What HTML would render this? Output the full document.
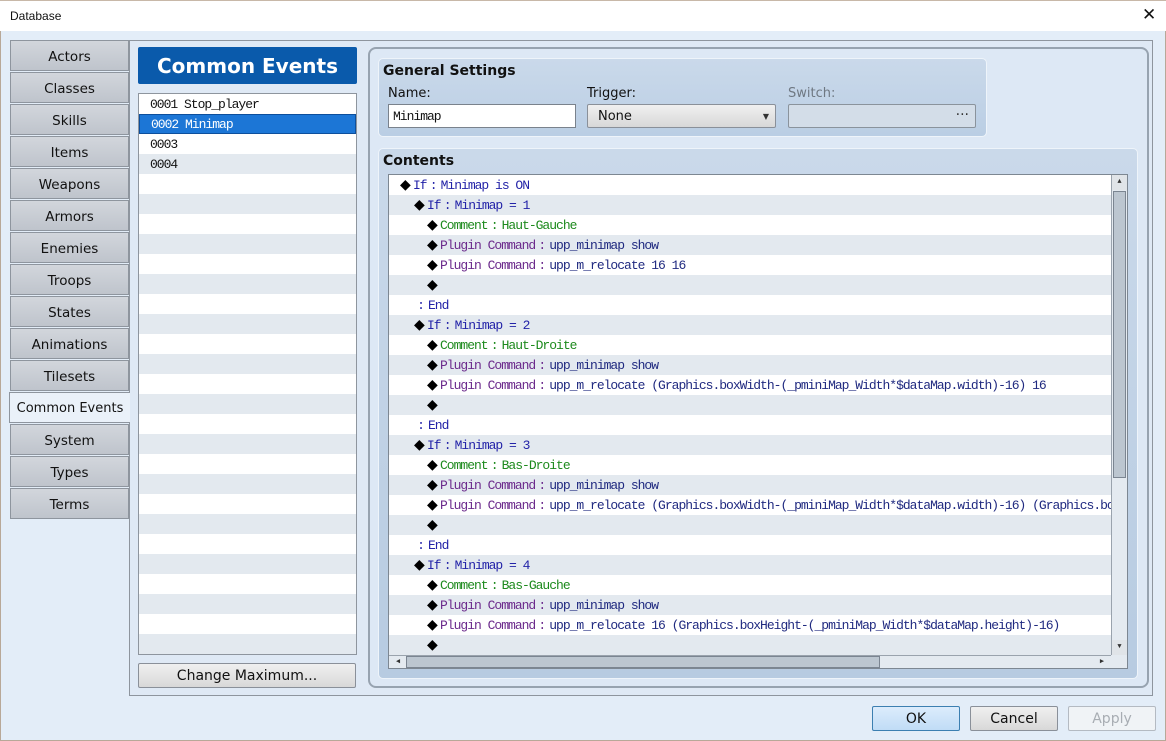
<!DOCTYPE html>
<html><head><meta charset="utf-8"><style>
*{box-sizing:border-box;margin:0;padding:0}
body{width:1166px;height:741px;position:relative;overflow:hidden;background:#e3edf8;font-family:"DejaVu Sans","Liberation Sans",sans-serif;font-size:14px;color:#111}
.a{position:absolute}
.tab{position:absolute;left:10px;width:119px;height:31px;background:linear-gradient(#d2d6dc,#bfc4cc);border:1px solid #8e959e;text-align:center;line-height:32px;font-size:13.5px}
.mono{font-family:"Liberation Mono","DejaVu Sans Mono",monospace;font-size:13px;letter-spacing:-1px}
.row{position:absolute;left:0;right:0;height:20px;line-height:21px;white-space:nowrap}
.btn{position:absolute;border:1px solid #8a9099;border-radius:2px;background:linear-gradient(#f0f0f0,#d8d8d8);text-align:center;font-size:14px}
.b{color:#2323a8}.g{color:#1d8a1d}.p{color:#6b2a8c}.d{color:#202a80}
.dm{color:#000;font-family:"DejaVu Sans",sans-serif;font-size:14px;letter-spacing:0;display:inline-block;width:13px}
.c{display:inline-block;width:14px;text-align:center;letter-spacing:0}
</style></head><body>
<div class="a" style="left:0;top:0;width:1166px;height:31px;background:#fff;border-top:1px solid #c8b8a8"></div>
<div class="a" style="left:10px;top:9px;font-family:'Liberation Sans',sans-serif;font-size:12px">Database</div>
<div class="a" style="left:1142px;top:5px;font-size:17px;font-family:'DejaVu Sans',sans-serif">✕</div>
<div class="a" style="left:0;top:31px;width:1px;height:710px;background:#b8a898"></div>
<div class="a" style="left:1165px;top:31px;width:1px;height:710px;background:#b8a898"></div>
<div class="a" style="left:0;top:740px;width:1166px;height:1px;background:#b8a898"></div>

<div class="a" style="left:129px;top:40px;width:1024px;height:656px;border:1px solid #8e959e;background:#dfe9f5"></div>

<div class="tab" style="top:40px">Actors</div>
<div class="tab" style="top:72px">Classes</div>
<div class="tab" style="top:104px">Skills</div>
<div class="tab" style="top:136px">Items</div>
<div class="tab" style="top:168px">Weapons</div>
<div class="tab" style="top:200px">Armors</div>
<div class="tab" style="top:232px">Enemies</div>
<div class="tab" style="top:264px">Troops</div>
<div class="tab" style="top:296px">States</div>
<div class="tab" style="top:328px">Animations</div>
<div class="tab" style="top:360px">Tilesets</div>
<div class="tab" style="top:392px;left:9px;width:121px;background:#eaf1f9;border-right:none;z-index:2;font-size:13px">Common Events</div>
<div class="tab" style="top:424px">System</div>
<div class="tab" style="top:456px">Types</div>
<div class="tab" style="top:488px">Terms</div>

<div class="a" style="left:138px;top:47px;width:219px;height:37px;background:#0a5aab;border-radius:2px;color:#fff;font-weight:bold;font-size:20px;text-align:center;line-height:39px">Common Events</div>

<div class="a mono" style="left:138px;top:93px;width:219px;height:562px;border:1px solid #8e959e;background:#fff;overflow:hidden">
<div style="position:absolute;left:0;right:0;top:0;height:560px;background:repeating-linear-gradient(#fff 0 20px,#e3e9ef 20px 40px)"></div>
<div class="row" style="top:0;padding-left:11px">0001 Stop_player</div>
<div class="row" style="top:20px;padding-left:11px;background:#1c76d6;color:#fff;border:1px solid #0d4f9c;line-height:19px">0002 Minimap</div>
<div class="row" style="top:40px;padding-left:11px">0003</div>
<div class="row" style="top:60px;padding-left:11px">0004</div>
</div>
<div class="btn" style="left:138px;top:663px;width:218px;height:25px;line-height:25px">Change Maximum...</div>

<div class="a" style="left:368px;top:47px;width:781px;height:641px;border:2px solid #97a3b0;border-radius:8px;background:#dde8f5"></div>
<div class="a" style="left:378px;top:58px;width:609px;height:79px;border-radius:5px;background:linear-gradient(#cad9ea,#bacee4);border:1px solid #eef4fa"></div>
<div class="a" style="left:383px;top:63px;font-weight:bold;font-size:14px">General Settings</div>
<div class="a" style="left:388px;top:86px;font-size:13px">Name:</div>
<div class="a" style="left:587px;top:86px;font-size:13px">Trigger:</div>
<div class="a" style="left:788px;top:86px;font-size:13px;color:#6f7882">Switch:</div>
<div class="a mono" style="left:388px;top:104px;width:188px;height:24px;background:#fff;border:1px solid #7a828c;line-height:23px;padding-left:4px">Minimap</div>
<div class="btn" style="left:587px;top:104px;width:189px;height:24px;line-height:23px;text-align:left;padding-left:10px;font-size:13px">None<span style="position:absolute;right:6px;top:0;font-size:8px;color:#333">▼</span></div>
<div class="a" style="left:788px;top:104px;width:188px;height:24px;background:#d3dde8;border:1px solid #8a939c;border-radius:2px;text-align:right;padding-right:6px;line-height:20px;color:#333">···</div>

<div class="a" style="left:378px;top:148px;width:760px;height:531px;border-radius:5px;background:linear-gradient(#cad9ea,#b7cbe1);border:1px solid #eef4fa"></div>
<div class="a" style="left:383px;top:153px;font-weight:bold;font-size:14px">Contents</div>

<div class="a mono" style="left:388px;top:174px;width:740px;height:495px;border:1px solid #7d8792;background:#fff;overflow:hidden">
<div style="position:absolute;left:0;top:0;width:722px;height:480px;background:repeating-linear-gradient(#fff 0 20px,#e3e9ef 20px 40px)"></div>
<div style="position:absolute;left:0;top:0;width:722px;height:480px;overflow:hidden">
<div class="row" style="top:0;padding-left:11px"><span class="dm">◆</span><span class="b">If<span class="c">:</span>Minimap is ON</span></div>
<div class="row" style="top:20px;padding-left:25px"><span class="dm">◆</span><span class="b">If<span class="c">:</span>Minimap = 1</span></div>
<div class="row" style="top:40px;padding-left:38px"><span class="dm">◆</span><span class="g">Comment<span class="c">:</span>Haut-Gauche</span></div>
<div class="row" style="top:60px;padding-left:38px"><span class="dm">◆</span><span class="p">Plugin Command<span class="c">:</span></span><span class="d">upp_minimap show</span></div>
<div class="row" style="top:80px;padding-left:38px"><span class="dm">◆</span><span class="p">Plugin Command<span class="c">:</span></span><span class="d">upp_m_relocate 16 16</span></div>
<div class="row" style="top:100px;padding-left:38px"><span class="dm">◆</span></div>
<div class="row" style="top:120px;padding-left:25px"><span class="b"><span class="c">:</span>End</span></div>
<div class="row" style="top:140px;padding-left:25px"><span class="dm">◆</span><span class="b">If<span class="c">:</span>Minimap = 2</span></div>
<div class="row" style="top:160px;padding-left:38px"><span class="dm">◆</span><span class="g">Comment<span class="c">:</span>Haut-Droite</span></div>
<div class="row" style="top:180px;padding-left:38px"><span class="dm">◆</span><span class="p">Plugin Command<span class="c">:</span></span><span class="d">upp_minimap show</span></div>
<div class="row" style="top:200px;padding-left:38px"><span class="dm">◆</span><span class="p">Plugin Command<span class="c">:</span></span><span class="d">upp_m_relocate (Graphics.boxWidth-(_pminiMap_Width*$dataMap.width)-16) 16</span></div>
<div class="row" style="top:220px;padding-left:38px"><span class="dm">◆</span></div>
<div class="row" style="top:240px;padding-left:25px"><span class="b"><span class="c">:</span>End</span></div>
<div class="row" style="top:260px;padding-left:25px"><span class="dm">◆</span><span class="b">If<span class="c">:</span>Minimap = 3</span></div>
<div class="row" style="top:280px;padding-left:38px"><span class="dm">◆</span><span class="g">Comment<span class="c">:</span>Bas-Droite</span></div>
<div class="row" style="top:300px;padding-left:38px"><span class="dm">◆</span><span class="p">Plugin Command<span class="c">:</span></span><span class="d">upp_minimap show</span></div>
<div class="row" style="top:320px;padding-left:38px"><span class="dm">◆</span><span class="p">Plugin Command<span class="c">:</span></span><span class="d">upp_m_relocate (Graphics.boxWidth-(_pminiMap_Width*$dataMap.width)-16) (Graphics.boxHeight-(_pminiMap_Width*$dataMap.height)-16)</span></div>
<div class="row" style="top:340px;padding-left:38px"><span class="dm">◆</span></div>
<div class="row" style="top:360px;padding-left:25px"><span class="b"><span class="c">:</span>End</span></div>
<div class="row" style="top:380px;padding-left:25px"><span class="dm">◆</span><span class="b">If<span class="c">:</span>Minimap = 4</span></div>
<div class="row" style="top:400px;padding-left:38px"><span class="dm">◆</span><span class="g">Comment<span class="c">:</span>Bas-Gauche</span></div>
<div class="row" style="top:420px;padding-left:38px"><span class="dm">◆</span><span class="p">Plugin Command<span class="c">:</span></span><span class="d">upp_minimap show</span></div>
<div class="row" style="top:440px;padding-left:38px"><span class="dm">◆</span><span class="p">Plugin Command<span class="c">:</span></span><span class="d">upp_m_relocate 16 (Graphics.boxHeight-(_pminiMap_Width*$dataMap.height)-16)</span></div>
<div class="row" style="top:460px;padding-left:38px"><span class="dm">◆</span></div>
</div>
<div style="position:absolute;left:722px;top:0;width:16px;height:480px;background:#e4eaf0;border-left:1px solid #9aa3ad"></div>
<div style="position:absolute;left:723px;top:0;width:15px;height:15px;background:#e0e4e8;font-size:7px;text-align:center;line-height:15px;color:#333;letter-spacing:0">▲</div>
<div style="position:absolute;left:724px;top:16px;width:13px;height:287px;background:#bcc6d0;border:1px solid #7b8591"></div>
<div style="position:absolute;left:723px;top:465px;width:15px;height:15px;background:#e0e4e8;font-size:7px;text-align:center;line-height:15px;color:#333;letter-spacing:0">▼</div>
<div style="position:absolute;left:0;top:480px;width:722px;height:14px;background:#e4eaf0;border-top:1px solid #9aa3ad"></div>
<div style="position:absolute;left:2px;top:481px;width:14px;height:13px;font-size:7px;text-align:center;line-height:13px;color:#333;letter-spacing:0">◀</div>
<div style="position:absolute;left:17px;top:481px;width:474px;height:12px;background:#bcc6d0;border:1px solid #7b8591"></div>
<div style="position:absolute;left:706px;top:481px;width:14px;height:13px;font-size:7px;text-align:center;line-height:13px;color:#333;letter-spacing:0">▶</div>
<div style="position:absolute;left:722px;top:480px;width:16px;height:14px;background:#e4eaf0"></div>
</div>

<div class="btn" style="left:872px;top:706px;width:88px;height:25px;line-height:25px;background:linear-gradient(#dcecfc,#c0dcf6);border-color:#3c7fb1">OK</div>
<div class="btn" style="left:970px;top:706px;width:88px;height:25px;line-height:25px">Cancel</div>
<div class="btn" style="left:1068px;top:706px;width:88px;height:25px;line-height:25px;background:#f0f3f6;color:#a8adb3;border-color:#b4bac2">Apply</div>
</body></html>
